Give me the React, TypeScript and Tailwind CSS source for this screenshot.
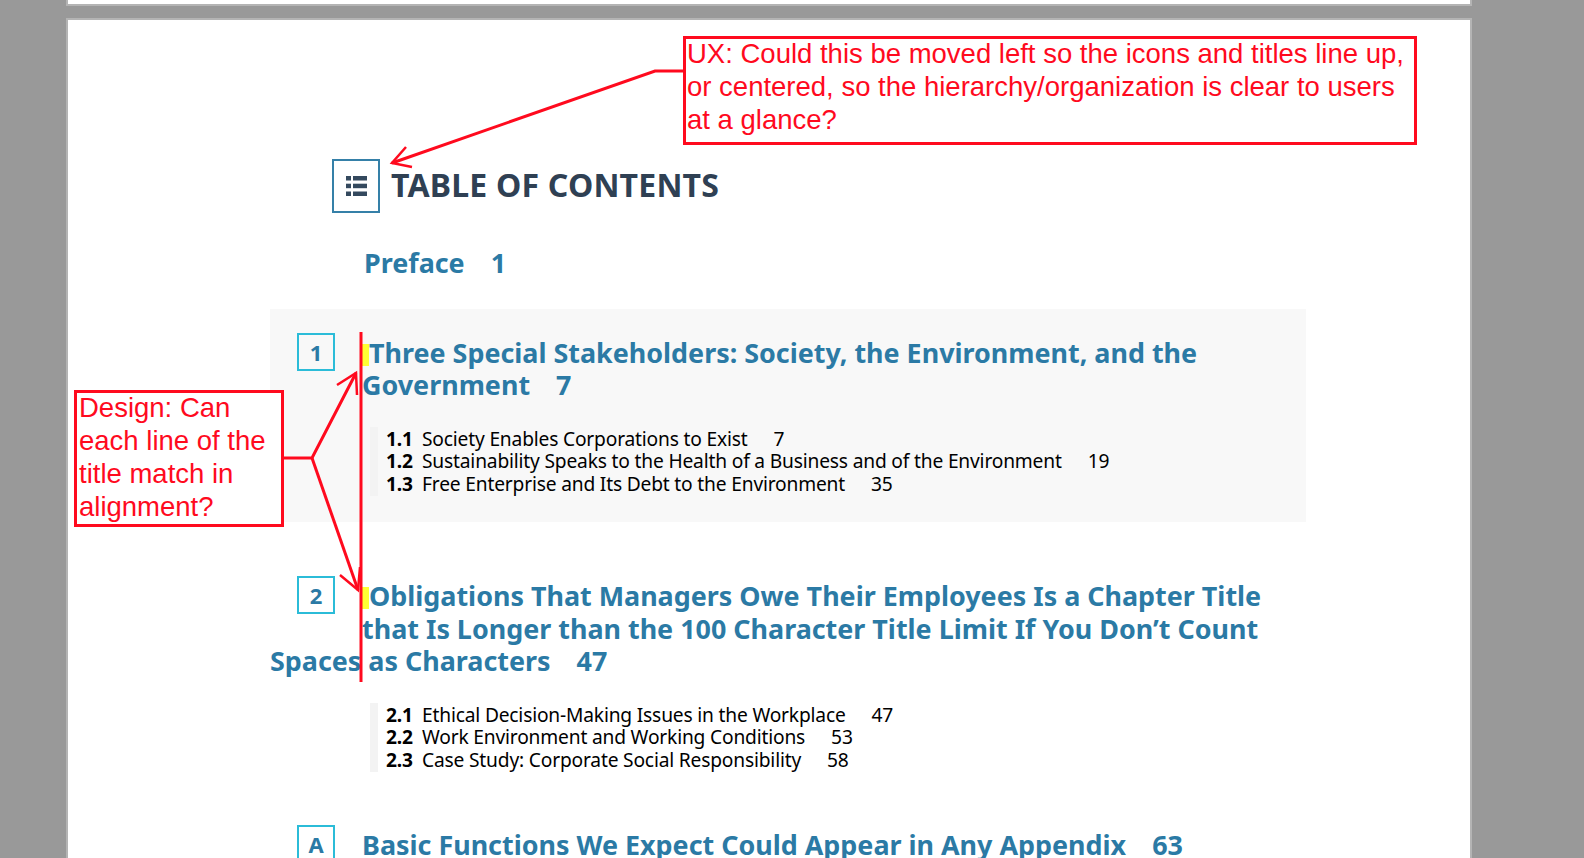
const blue = 'text-[#2b7aa5]';

type Sub = { num: string; title: string; page: string };

function SubList({ items, className }: { items: Sub[]; className: string }) {
  return (
    <ul className={`${className} ml-[100px] border-l-[8px] border-[#f3f3f3] pl-[8px] py-px text-[19.2px] leading-[22.5px] text-black`}>
      {items.map((item) => (
        <li key={item.num} className="tracking-[-0.18px]">
          <span className="inline-block w-[36px] font-bold">{item.num}</span>
          {item.title}
          <span className="ml-[26px]">{item.page}</span>
        </li>
      ))}
    </ul>
  );
}

function ChapterBox({ label }: { label: string }) {
  return (
    <div className="float-left ml-[27px] mr-[27px] -mt-1 mb-[20px] flex h-[38px] w-[38px] items-center justify-center border-[2.5px] border-[#2bbcd8] text-[22px] font-bold text-[#2b7aa5]">
      {label}
    </div>
  );
}

function Mark() {
  return <span className="inline-block h-[22px] w-[7px] translate-y-[3px] bg-[#ffff33]" />;
}

function ListIcon() {
  return (
    <svg width="21" height="20" viewBox="0 0 21 20" className="fill-[#34495e]">
      <rect x="0" y="0" width="5" height="4.5" />
      <rect x="7" y="0" width="14" height="4.5" />
      <rect x="0" y="7.7" width="5" height="4.5" />
      <rect x="7" y="7.7" width="14" height="4.5" />
      <rect x="0" y="15.5" width="5" height="4.5" />
      <rect x="7" y="15.5" width="14" height="4.5" />
    </svg>
  );
}

function Annotations() {
  return (
    <>
      <svg
        width="1584"
        height="858"
        viewBox="0 0 1584 858"
        className="pointer-events-none absolute left-0 top-0"
        fill="none"
        stroke="#ff0a1e"
        strokeWidth="3"
      >
        <path d="M683 71 H655 L392 163" />
        <path d="M406 147 L392 163 L412 167" strokeWidth="2.5" />
        <path d="M283 458 H312 L356 373" />
        <path d="M337 385 L356 373 L357 395" strokeWidth="2.5" />
        <path d="M312 458 L358 590" />
        <path d="M340 575 L358 590 L360 567" strokeWidth="2.5" />
        <path d="M361 332 V682" strokeWidth="3" />
      </svg>
      <div className="absolute left-[683px] top-[36px] h-[109px] w-[734px] border-[3px] border-[#ff0a1e] bg-white font-['Liberation_Sans',sans-serif] text-[27.5px] leading-[33px] text-[#ff0a1e]">
        <p className="-mt-[2px] pl-[1px]">
          UX: Could this be moved left so the icons and titles line up,
          <br />
          or centered, so the hierarchy/organization is clear to users
          <br />
          at a glance?
        </p>
      </div>
      <div className="absolute left-[74px] top-[390px] h-[137px] w-[210px] border-[3px] border-[#ff0a1e] bg-white font-['Liberation_Sans',sans-serif] text-[27.5px] leading-[33px] text-[#ff0a1e]">
        <p className="-mt-[2px] pl-[2px]">
          Design: Can
          <br />
          each line of the
          <br />
          title match in
          <br />
          alignment?
        </p>
      </div>
    </>
  );
}

export default function App() {
  return (
    <div className="relative h-[858px] overflow-hidden bg-[#999999] font-['Noto_Sans',sans-serif]">
      <div className="ml-[66px] h-[6px] w-[1406px] border-x-2 border-b-2 border-[#b4b4b4] bg-white" />
      <div className="mt-[12px] ml-[66px] h-[900px] w-[1406px] border-x-2 border-t-2 border-[#b4b4b4] bg-white">
        <div className="ml-[264px] mt-[139px] flex items-start">
          <div className="flex h-[54px] w-[48px] items-center justify-center border-[2.5px] border-[#3580a8]">
            <ListIcon />
          </div>
          <h1 className="ml-[11px] mt-[4px] text-[32px] font-bold leading-[44px] tracking-[0.2px] text-[#2f4053]">
            TABLE OF CONTENTS
          </h1>
        </div>
        <div className={`ml-[296px] mt-[30px] text-[26.9px] font-bold leading-[40px] ${blue}`}>
          Preface<span className="ml-[26px]">1</span>
        </div>

        <div className="ml-[202px] mt-[26px] w-[1036px]">
          <section className="flow-root bg-[#f8f8f8] pb-[26px] pt-[28px] pr-[16px]">
            <ChapterBox label="1" />
            <h2 className={`text-[26.9px] font-bold leading-[32.4px] ${blue}`}>
              <Mark />
              Three Special Stakeholders: Society, the Environment, and the Government
              <span className="ml-[26px]">7</span>
            </h2>
            <SubList
              className="mt-[25px]"
              items={[
                { num: '1.1', title: 'Society Enables Corporations to Exist', page: '7' },
                { num: '1.2', title: 'Sustainability Speaks to the Health of a Business and of the Environment', page: '19' },
                { num: '1.3', title: 'Free Enterprise and Its Debt to the Environment', page: '35' },
              ]}
            />
          </section>

          <section className="mt-[30px] flow-root pb-[26px] pt-[28px] pr-[16px]">
            <ChapterBox label="2" />
            <h2 className={`text-[26.9px] font-bold leading-[32.4px] ${blue}`}>
              <Mark />
              Obligations That Managers Owe Their Employees Is a Chapter Title that Is Longer than the 100 Character Title Limit If You Don’t Count Spaces as Characters
              <span className="ml-[26px]">47</span>
            </h2>
            <SubList
              className="mt-[25px]"
              items={[
                { num: '2.1', title: 'Ethical Decision-Making Issues in the Workplace', page: '47' },
                { num: '2.2', title: 'Work Environment and Working Conditions', page: '53' },
                { num: '2.3', title: 'Case Study: Corporate Social Responsibility', page: '58' },
              ]}
            />
          </section>

          <section className="mt-[3px] flow-root pt-[28px] pr-[16px]">
            <ChapterBox label="A" />
            <h2 className={`text-[26.9px] font-bold leading-[32.4px] ${blue}`}>
              Basic Functions We Expect Could Appear in Any Appendix
              <span className="ml-[26px]">63</span>
            </h2>
          </section>
        </div>
      </div>
      <Annotations />
    </div>
  );
}
